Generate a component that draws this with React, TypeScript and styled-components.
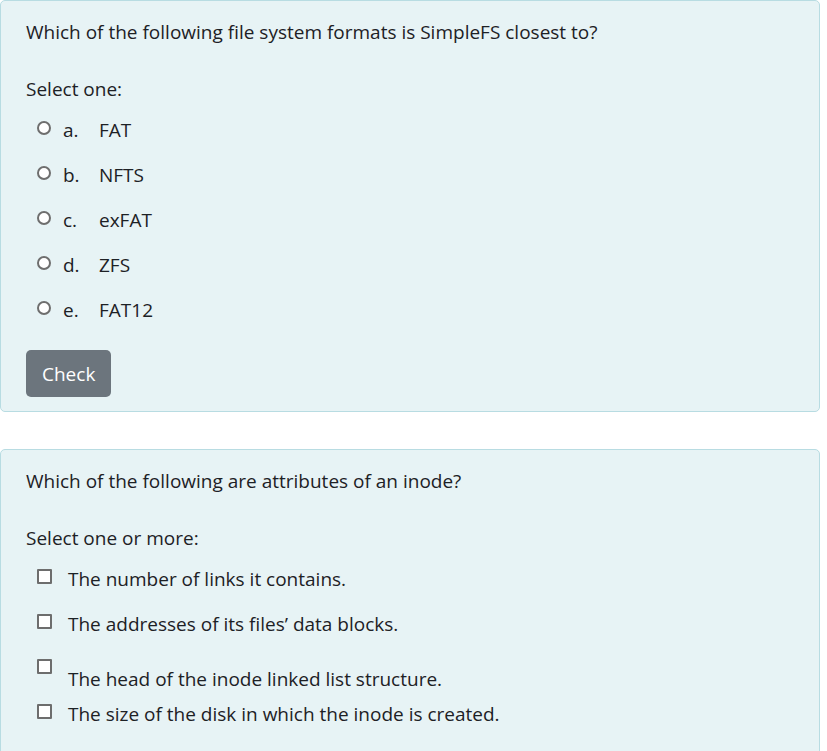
import React from 'react';
import styled, { createGlobalStyle } from 'styled-components';

const GlobalStyle = createGlobalStyle`
  html, body {
    margin: 0;
    padding: 0;
    background: #ffffff;
  }
  body {
    font-family: "Open Sans", "Noto Sans", "Liberation Sans", sans-serif;
    color: #1d2125;
  }
`;

const singleOptions = [
  { letter: 'a.', text: 'FAT' },
  { letter: 'b.', text: 'NFTS' },
  { letter: 'c.', text: 'exFAT' },
  { letter: 'd.', text: 'ZFS' },
  { letter: 'e.', text: 'FAT12' },
];

const multiOptions = [
  { text: 'The number of links it contains.', pushed: false },
  { text: 'The addresses of its files\u2019 data blocks.', pushed: false },
  { text: 'The head of the inode linked list structure.', pushed: true },
  { text: 'The size of the disk in which the inode is created.', pushed: false },
];

const App: React.FC = () => {
  return (
    <Page>
      <GlobalStyle />
      <Card>
        <QuestionText>Which of the following file system formats is SimpleFS closest to?</QuestionText>
        <Prompt>Select one:</Prompt>
        <Answers>
          {singleOptions.map((o) => (
            <Row key={o.letter}>
              <Radio />
              <Letter>{o.letter}</Letter>
              <AnswerText>{o.text}</AnswerText>
            </Row>
          ))}
        </Answers>
        <CheckButton>Check</CheckButton>
      </Card>
      <Card $last>
        <QuestionText>Which of the following are attributes of an inode?</QuestionText>
        <Prompt>Select one or more:</Prompt>
        <Answers>
          {multiOptions.map((o, i) => (
            <Row key={i}>
              <Checkbox />
              <AnswerText $boxed $pushed={o.pushed}>{o.text}</AnswerText>
            </Row>
          ))}
        </Answers>
      </Card>
    </Page>
  );
};

const Page = styled.div`
  width: 820px;
  display: flex;
  flex-direction: column;
  gap: 37px;
`;

const Card = styled.div<{ $last?: boolean }>`
  box-sizing: border-box;
  background: #e7f3f5;
  border: 1px solid #b8dce2;
  border-radius: 5px;
  padding: 17px 25px ${({ $last }) => ($last ? '40px' : '14px')};
  ${({ $last }) => $last && 'border-bottom-left-radius: 0; border-bottom-right-radius: 0;'}
`;

const QuestionText = styled.div`
  font-size: 19px;
  line-height: 28px;
`;

const Prompt = styled.div`
  margin-top: 29px;
  font-size: 19px;
  line-height: 28px;
`;

const Answers = styled.div`
  margin-top: 4px;
  display: flex;
  flex-direction: column;
`;

const Row = styled.div`
  display: flex;
  align-items: flex-start;
  height: 45px;
  box-sizing: border-box;
  padding: 8.5px 0 8.5px 11px;
`;

const Radio = styled.span`
  flex: none;
  box-sizing: border-box;
  width: 14px;
  height: 14px;
  margin-top: 5px;
  border: 2px solid #6e6e6e;
  border-radius: 50%;
  background: #ffffff;
`;

const Checkbox = styled.span`
  flex: none;
  box-sizing: border-box;
  width: 15px;
  height: 15px;
  margin-top: 4.5px;
  border: 2px solid #6d6d6d;
  border-radius: 1px;
  background: #ffffff;
`;

const Letter = styled.span`
  margin-left: 12px;
  width: 36px;
  font-size: 19px;
  line-height: 28px;
`;

const AnswerText = styled.span<{ $boxed?: boolean; $pushed?: boolean }>`
  font-size: 19px;
  line-height: 28px;
  white-space: nowrap;
  ${({ $boxed }) => $boxed && 'margin-left: 16px;'}
  ${({ $pushed }) => $pushed && 'padding-top: 10px;'}
`;

const CheckButton = styled.button`
  margin-top: 18px;
  align-self: flex-start;
  display: block;
  box-sizing: border-box;
  height: 47px;
  padding: 0 16px;
  border: none;
  border-radius: 5px;
  background: #6c757d;
  color: #ffffff;
  font-family: inherit;
  font-size: 19px;
  line-height: 28px;
  cursor: pointer;
`;

export default App;
